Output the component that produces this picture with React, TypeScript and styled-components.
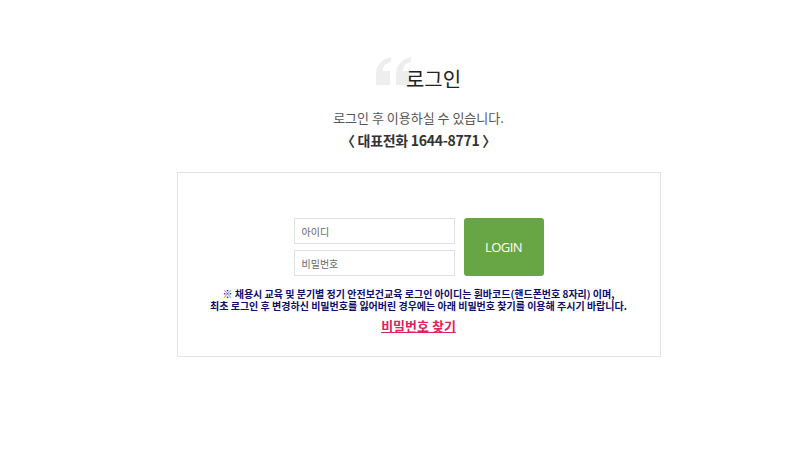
import React from "react";
import styled, { createGlobalStyle } from "styled-components";

const GlobalStyle = createGlobalStyle`
  html, body {
    margin: 0;
    padding: 0;
    background: #ffffff;
    font-family: "Noto Sans CJK KR", "Open Sans", sans-serif;
  }
`;

const Page = styled.div`
  width: 800px;
  height: 468px;
  box-sizing: border-box;
  padding: 0 0 0 37px;
  display: flex;
  flex-direction: column;
  align-items: center;
`;

const Heading = styled.h2`
  position: relative;
  isolation: isolate;
  margin: 66px 0 0;
  padding-left: 30px;
  font-size: 20px;
  line-height: 26px;
  font-weight: 400;
  color: #222;
`;

const QuoteMark = styled.svg`
  position: absolute;
  left: 0;
  top: -9px;
  width: 35px;
  height: 28px;
  z-index: -1;
`;

const Lead = styled.p`
  margin: 16px 0 0;
  font-size: 13px;
  line-height: 20px;
  color: #555;
  text-align: center;
`;

const Phone = styled.p`
  margin: 2px 0 0;
  font-size: 14px;
  line-height: 20px;
  font-weight: 700;
  letter-spacing: -0.3px;
  color: #333;
`;

const Box = styled.section`
  margin-top: 22px;
  width: 484px;
  height: 185px;
  box-sizing: border-box;
  border: 1px solid #e3e3e3;
  display: flex;
  flex-direction: column;
  align-items: center;
  padding-top: 45px;
`;

const FormRow = styled.form`
  display: flex;
  gap: 9px;
`;

const Fields = styled.div`
  display: flex;
  flex-direction: column;
  gap: 6px;
`;

const Field = styled.input`
  width: 161px;
  height: 26px;
  box-sizing: border-box;
  border: 1px solid #e0e0e0;
  padding: 0 7px;
  font-family: "Noto Sans CJK KR", sans-serif;
  font-size: 10px;
  color: #333;
  outline: none;

  &::placeholder {
    color: #666;
  }
`;

const LoginButton = styled.button`
  width: 80px;
  height: 58px;
  border: 0;
  border-radius: 3px;
  background: #68a544;
  color: #fff;
  font-family: "Open Sans", sans-serif;
  font-size: 13px;
  letter-spacing: -0.6px;
  cursor: pointer;
`;

const Notice = styled.p`
  margin: 12px 0 0;
  font-size: 10px;
  line-height: 12px;
  font-weight: 700;
  color: #0b0b6b;
  text-align: center;
`;

const FindLink = styled.a`
  margin-top: 4px;
  font-size: 13px;
  line-height: 20px;
  font-weight: 700;
  color: #e0215c;
  text-decoration: underline;
`;

const quotePath =
  "M15 0 C6 2 0 8 0 17 L0 28 L14 28 L14 14 L7 14 C7 9 10 6 15 5 Z";

export default function App() {
  return (
    <>
      <GlobalStyle />
      <Page>
        <Heading>
          <QuoteMark viewBox="0 0 35 28" aria-hidden="true">
            <path d={quotePath} fill="#eeeeee" />
            <path d={quotePath} fill="#eeeeee" transform="translate(20 0)" />
          </QuoteMark>
          로그인
        </Heading>
        <Lead>로그인 후 이용하실 수 있습니다.</Lead>
        <Phone>〈 대표전화 1644-8771 〉</Phone>
        <Box>
          <FormRow onSubmit={(e) => e.preventDefault()}>
            <Fields>
              <Field type="text" placeholder="아이디" />
              <Field type="password" placeholder="비밀번호" />
            </Fields>
            <LoginButton type="submit">LOGIN</LoginButton>
          </FormRow>
          <Notice>
            ※ 채용시 교육 및 분기별 정기 안전보건교육 로그인 아이디는 휜바코드(핸드폰번호 8자리) 이며,
            <br />
            최초 로그인 후 변경하신 비밀번호를 잃어버린 경우에는 아래 비밀번호 찾기를 이용해 주시기 바랍니다.
          </Notice>
          <FindLink href="#">비밀번호 찾기</FindLink>
        </Box>
      </Page>
    </>
  );
}
